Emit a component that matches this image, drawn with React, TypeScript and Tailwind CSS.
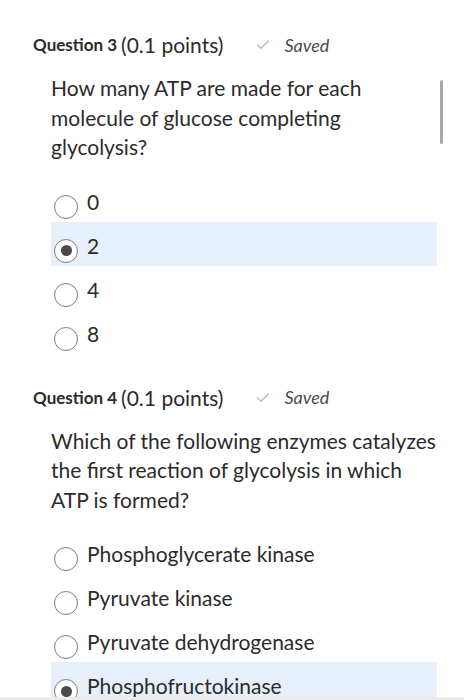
import { Check } from "lucide-react";

type Question = {
  number: number;
  points: string;
  prompt: string[];
  options: string[];
  selected: number;
};

const QUESTIONS: Question[] = [
  {
    number: 3,
    points: "(0.1 points)",
    prompt: ["How many ATP are made for each", "molecule of glucose completing", "glycolysis?"],
    options: ["0", "2", "4", "8"],
    selected: 1,
  },
  {
    number: 4,
    points: "(0.1 points)",
    prompt: [
      "Which of the following enzymes catalyzes",
      "the first reaction of glycolysis in which",
      "ATP is formed?",
    ],
    options: ["Phosphoglycerate kinase", "Pyruvate kinase", "Pyruvate dehydrogenase", "Phosphofructokinase"],
    selected: 3,
  },
];

function Radio({ checked }: { checked: boolean }) {
  return (
    <span className="flex size-[24px] shrink-0 items-center justify-center rounded-full border border-[#7c7c7c] bg-white">
      {checked && <span className="size-[11px] rounded-full bg-[#4a4a4a]" />}
    </span>
  );
}

function QuestionBlock({ q, first }: { q: Question; first: boolean }) {
  return (
    <section className={first ? "pt-[32px]" : "pt-[31px]"}>
      <header className="flex h-[26px] items-center pl-[33px] text-[#2b2b2b]">
        <span className="text-[17px] font-bold">Question {q.number}</span>
        <span className="ml-[4px] text-[21px]">{q.points}</span>
        <Check className="ml-[32px] size-[16px] text-[#b8b8b8]" strokeWidth={2} aria-hidden />
        <span className="ml-[13px] text-[18px] italic text-[#4a4a4a]">Saved</span>
      </header>

      <p className="mt-[15px] pl-[51px] text-[21px] leading-[29.5px] text-[#2b2b2b]">
        {q.prompt.map((line) => (
          <span key={line} className="block whitespace-nowrap">
            {line}
          </span>
        ))}
      </p>

      <ul className="mt-[16px] ml-[51px] w-[386px]">
        {q.options.map((opt, i) => (
          <li
            key={opt}
            className={
              "flex h-[44px] items-end gap-[9px] pb-[3px] pl-[3px] " + (i === q.selected ? "bg-[#e7effa]" : "")
            }
          >
            <Radio checked={i === q.selected} />
            <span className="mb-[5px] whitespace-nowrap text-[21px] leading-[24px] text-[#2b2b2b]">{opt}</span>
          </li>
        ))}
      </ul>
    </section>
  );
}

export default function App() {
  return (
    <div
      className="relative h-[700px] w-[464px] overflow-hidden bg-white"
      style={{ fontFamily: "Lato, 'Noto Sans', sans-serif" }}
    >
      {QUESTIONS.map((q, i) => (
        <QuestionBlock key={q.number} q={q} first={i === 0} />
      ))}
      <div className="absolute left-[440px] top-[80px] h-[64px] w-[3px] rounded-full bg-[#a9a9a9]" />
      <div className="absolute inset-x-0 bottom-0 h-[3px] bg-[#ececec]" />
    </div>
  );
}
